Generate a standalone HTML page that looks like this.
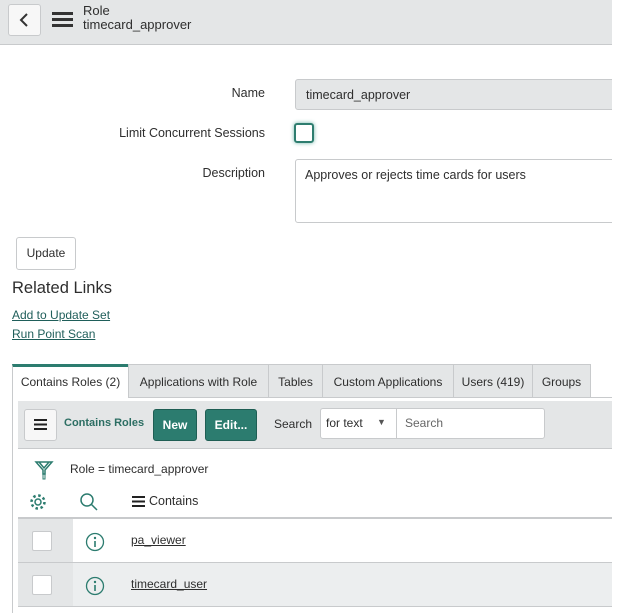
<!DOCTYPE html>
<html><head><style>
*{box-sizing:border-box;margin:0;padding:0}
body{width:634px;height:613px;background:#fff;font-family:"Liberation Sans",sans-serif;font-size:12px;color:#2e2e2e;position:relative;overflow:hidden}
#w{position:absolute;left:0;top:0;width:612px;height:613px;overflow:hidden}
.a{position:absolute}
.hdr{left:0;top:0;width:612px;height:45px;background:#e4e6e7;border-bottom:1px solid #c8cacc}
.btn{background:#f7f7f7;border:1px solid #c8cacc;border-radius:3px}
.lbl{right:347px;text-align:right;font-size:12.5px}
.inp{border:1px solid #c8cacc;border-radius:3px;left:295px;width:330px}
.tab{top:364px;height:34px;background:#e4e6e7;border:1px solid #c8cacc;border-bottom:none;line-height:34px;text-align:center;font-size:12px}
.g{background:#2c7c6f;color:#fff;border:1px solid #1f5e54;border-radius:3px;font-weight:bold;text-align:center;line-height:30px}
a{color:#1f5e5a;text-decoration:underline}
.cb{width:20px;height:20px;border:1px solid #c8cacc;background:#fff;border-radius:2px}
</style></head><body><div id="w">
<div class="a hdr"></div>
<div class="a btn" style="left:8px;top:4px;width:33px;height:32px"></div>
<svg class="a" style="left:17px;top:12px" width="14" height="16"><path d="M10 2 L4 8 L10 14" stroke="#333" stroke-width="2" fill="none"/></svg>
<svg class="a" style="left:52px;top:11px" width="21" height="16"><rect y="1" width="21" height="3" fill="#333"/><rect y="7" width="21" height="3" fill="#333"/><rect y="13" width="21" height="3" fill="#333"/></svg>
<div class="a" style="left:83px;top:4px;font-size:13px;line-height:14px">Role<br>timecard_approver</div>

<div class="a lbl" style="top:86px">Name</div>
<div class="a inp" style="top:79px;height:31px;background:#e4e6e7;padding:8px 10px;font-size:12.5px">timecard_approver</div>
<div class="a lbl" style="top:126px">Limit Concurrent Sessions</div>
<div class="a" style="left:294px;top:123px;width:20px;height:20px;border:2px solid #2e7d6f;border-radius:3px;box-shadow:0 0 4px #6fb5a8"></div>
<div class="a lbl" style="top:166px">Description</div>
<div class="a inp" style="top:159px;height:64px;padding:8px 9px;font-size:12.5px">Approves or rejects time cards for users</div>

<div class="a btn" style="left:16px;top:237px;width:60px;height:33px;background:#fff;text-align:center;line-height:31px">Update</div>
<div class="a" style="left:12px;top:279px;font-size:16.5px">Related Links</div>
<div class="a" style="left:12px;top:308px"><a>Add to Update Set</a></div>
<div class="a" style="left:12px;top:327px"><a>Run Point Scan</a></div>

<div class="a tab" style="left:12px;width:117px;background:#fff;border-top:3px solid #2c7c6f;line-height:31px">Contains Roles (2)</div>
<div class="a tab" style="left:128px;width:141px">Applications with Role</div>
<div class="a tab" style="left:268px;width:55px">Tables</div>
<div class="a tab" style="left:322px;width:132px">Custom Applications</div>
<div class="a tab" style="left:453px;width:80px">Users (419)</div>
<div class="a tab" style="left:532px;width:59px">Groups</div>
<div class="a" style="left:128px;top:397px;width:484px;height:1px;background:#c8cacc"></div>
<div class="a" style="left:12px;top:397px;width:1px;height:216px;background:#c8cacc"></div>

<div class="a" style="left:18px;top:401px;width:594px;height:48px;background:#e4e6e7;border-bottom:1px solid #c8cacc"></div>
<div class="a btn" style="left:24px;top:409px;width:33px;height:32px"></div>
<svg class="a" style="left:34px;top:419px" width="13" height="11"><rect width="13" height="2" fill="#222"/><rect y="4.5" width="13" height="2" fill="#222"/><rect y="9" width="13" height="2" fill="#222"/></svg>
<div class="a" style="left:64px;top:417px;color:#2c6e63;font-weight:bold;font-size:11px">Contains Roles</div>
<div class="a g" style="left:153px;top:409px;width:44px;height:32px">New</div>
<div class="a g" style="left:205px;top:409px;width:52px;height:32px">Edit...</div>
<div class="a" style="left:274px;top:417px">Search</div>
<div class="a" style="left:320px;top:408px;width:225px;height:31px;background:#fff;border:1px solid #c8cacc;border-radius:3px"></div>
<div class="a" style="left:396px;top:408px;width:1px;height:31px;background:#c8cacc"></div>
<div class="a" style="left:326px;top:416px">for text</div>
<div class="a" style="left:377px;top:417px;font-size:9px;color:#555">▼</div>
<div class="a" style="left:405px;top:416px;color:#666">Search</div>

<svg class="a" style="left:34px;top:459px" width="20" height="22"><path d="M2 3 H18 L11 11 V15 H9 V11 Z M5 3 L10 9 L15 3" fill="none" stroke="#2c7c6f" stroke-width="1.5"/><path d="M9 15 V20 H11 V15" stroke="#2c7c6f" fill="none"/></svg>
<div class="a" style="left:70px;top:462px">Role = timecard_approver</div>
<svg class="a" style="left:28px;top:492px" width="20" height="20"><circle cx="10" cy="10" r="3" fill="none" stroke="#2c7c6f" stroke-width="1.5"/><circle cx="10" cy="10" r="6.5" fill="none" stroke="#2c7c6f" stroke-width="2.5" stroke-dasharray="2.5 2.6"/></svg>
<svg class="a" style="left:79px;top:492px" width="20" height="20"><circle cx="8" cy="8" r="6" fill="none" stroke="#2c7c6f" stroke-width="1.5"/><path d="M12.5 12.5 L18 18" stroke="#2c7c6f" stroke-width="1.5"/></svg>
<svg class="a" style="left:132px;top:496px" width="13" height="11"><rect width="13" height="2" fill="#222"/><rect y="4.5" width="13" height="2" fill="#222"/><rect y="9" width="13" height="2" fill="#222"/></svg>
<div class="a" style="left:149px;top:494px;font-size:12.5px">Contains</div>
<div class="a" style="left:18px;top:517px;width:594px;height:2px;background:#c8cacc"></div>

<div class="a" style="left:18px;top:519px;width:55px;height:44px;background:#e4e6e7"></div>
<div class="a" style="left:18px;top:562px;width:594px;height:1px;background:#c8cacc"></div>
<div class="a" style="left:18px;top:563px;width:594px;height:44px;background:#eceeef"></div>
<div class="a" style="left:18px;top:563px;width:55px;height:44px;background:#e4e6e7"></div>
<div class="a" style="left:18px;top:606px;width:594px;height:1px;background:#c8cacc"></div>
<div class="a cb" style="left:32px;top:531px"></div>
<div class="a cb" style="left:32px;top:575px"></div>
<svg class="a" style="left:85px;top:532px" width="20" height="20"><circle cx="10" cy="10" r="8.5" fill="none" stroke="#2c7c6f" stroke-width="1.3"/><circle cx="10" cy="6" r="1.2" fill="#2c7c6f"/><path d="M10 9 V15" stroke="#2c7c6f" stroke-width="1.6"/></svg>
<svg class="a" style="left:85px;top:576px" width="20" height="20"><circle cx="10" cy="10" r="8.5" fill="none" stroke="#2c7c6f" stroke-width="1.3"/><circle cx="10" cy="6" r="1.2" fill="#2c7c6f"/><path d="M10 9 V15" stroke="#2c7c6f" stroke-width="1.6"/></svg>
<div class="a" style="left:131px;top:533px"><a style="color:#2e2e2e">pa_viewer</a></div>
<div class="a" style="left:131px;top:577px"><a style="color:#2e2e2e">timecard_user</a></div>
</div></body></html>
